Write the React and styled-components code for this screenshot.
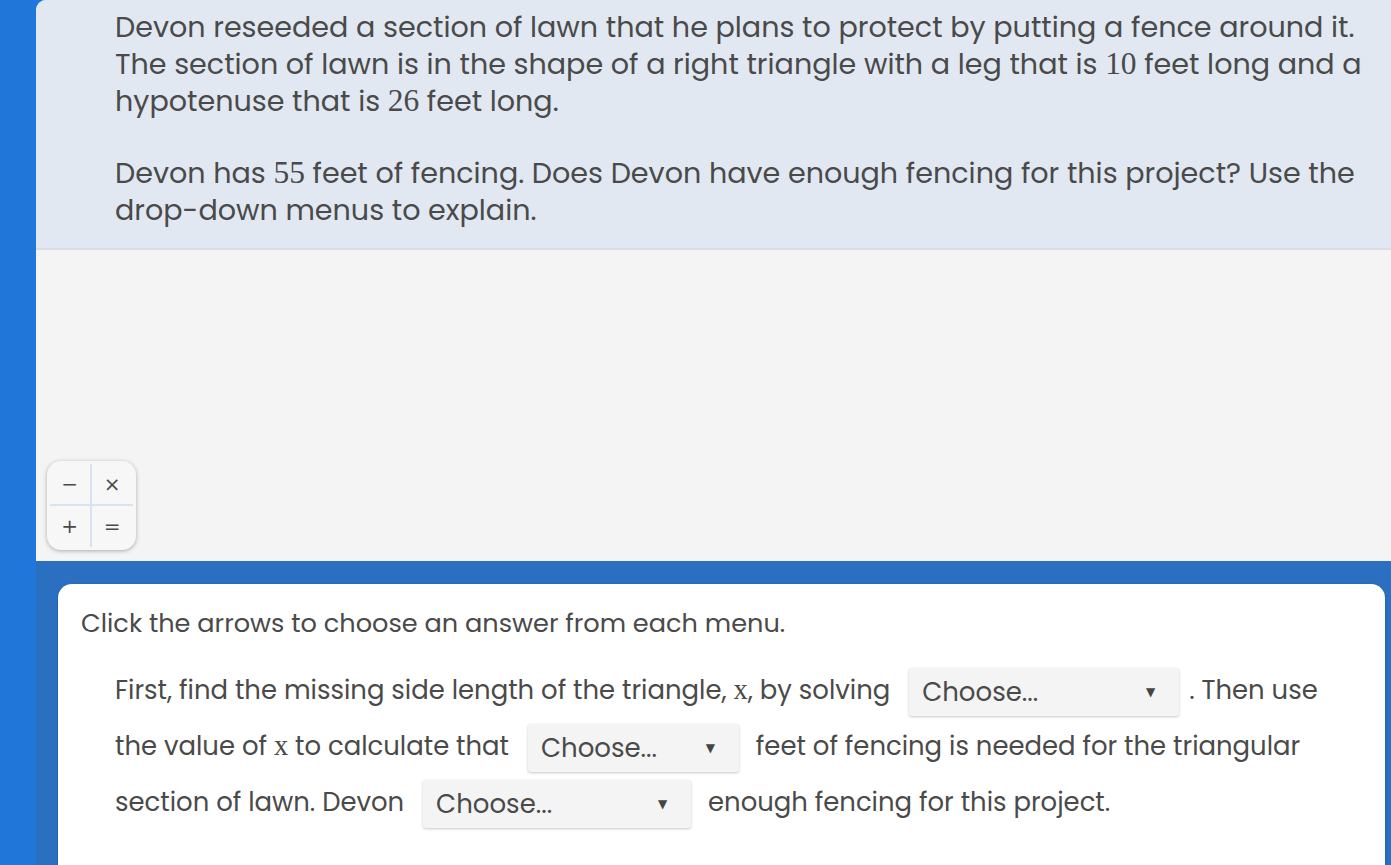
import React from 'react'
import styled, { createGlobalStyle } from 'styled-components'

const GlobalStyle = createGlobalStyle`
  html, body {
    margin: 0;
    padding: 0;
    background: #2176d9;
    overflow: hidden;
  }
  body {
    font-family: "Poppins", "Noto Sans", sans-serif;
    color: #4a4a4a;
  }
`

function Dropdown({ width }) {
  return (
    <Select $width={width}>
      <SelectText>Choose...</SelectText>
      <Caret>▼</Caret>
    </Select>
  )
}

function App() {
  return (
    <>
      <GlobalStyle />
      <Page>
        <Main>
          <Question>
            <Para>
              Devon reseeded a section of lawn that he plans to protect by putting a fence around it.
              The section of lawn is in the shape of a right triangle with a leg that is <Num>10</Num> feet long and a
              hypotenuse that is <Num>26</Num> feet long.
            </Para>
            <Para>
              Devon has <Num>55</Num> feet of fencing. Does Devon have enough fencing for this project? Use the
              drop-down menus to explain.
            </Para>
          </Question>
          <Workspace>
            <Calc>
              <CalcKey>−</CalcKey>
              <CalcKey>×</CalcKey>
              <CalcKey>+</CalcKey>
              <CalcKey>=</CalcKey>
            </Calc>
          </Workspace>
          <AnswerBand>
            <AnswerCard>
              <Prompt>Click the arrows to choose an answer from each menu.</Prompt>
              <Sentence>
                First, find the missing side length of the triangle, <Num>x</Num>, by solving{' '}
                <Dropdown width={270} />. Then use the value of <Num>x</Num> to calculate that{' '}
                <Dropdown width={211} /> feet of fencing is needed for the triangular section of lawn. Devon{' '}
                <Dropdown width={268} /> enough fencing for this project.
              </Sentence>
            </AnswerCard>
          </AnswerBand>
        </Main>
      </Page>
    </>
  )
}

const Page = styled.div`
  width: 1391px;
  height: 865px;
  display: flex;
  padding-left: 36px;
  box-sizing: border-box;
  background: #2176d9;
`
const Main = styled.div`
  flex: 1;
  display: flex;
  flex-direction: column;
  background: #f4f4f4;
  border-top-left-radius: 10px;
  overflow: hidden;
`
const Question = styled.section`
  background: #e1e8f1;
  border-bottom: 2px solid #d9dee4;
  padding: 9px 12px 18px 79px;
  height: 250px;
  box-sizing: border-box;
`
const Para = styled.p`
  margin: 0 0 35px;
  font-size: 28.6px;
  line-height: 37px;
  &:last-child { margin-bottom: 0; }
`
const Num = styled.span`
  font-family: "Liberation Serif", "Times New Roman", serif;
  font-size: 1.1em;
  line-height: 1;
`
const Workspace = styled.div`
  height: 311px;
  display: flex;
  align-items: flex-end;
  padding: 0 0 11px 11px;
  box-sizing: border-box;
`
const Calc = styled.div`
  width: 89px;
  height: 89px;
  box-sizing: border-box;
  padding: 3px;
  background: #f7f7f8;
  border-radius: 14px;
  box-shadow: 0 1px 4px rgba(0, 0, 0, 0.3);
  display: grid;
  grid-template-columns: 1fr 1fr;
  grid-template-rows: 1fr 1fr;
`
const CalcKey = styled.div`
  display: flex;
  align-items: center;
  justify-content: center;
  font-size: 20px;
  color: #4a4a4a;
  font-family: "DejaVu Sans", sans-serif;
  &:nth-child(odd) { border-right: 2px solid #d7e3f0; }
  &:nth-child(-n+2) { border-bottom: 2px solid #d7e3f0; }
`
const AnswerBand = styled.div`
  flex: 1;
  background: #2b70c0;
  padding: 23px 6px 0 22px;
`
const AnswerCard = styled.div`
  background: #fff;
  height: 100%;
  border-radius: 14px 14px 0 0;
  box-shadow: 0 1px 3px rgba(0, 0, 0, 0.25);
  padding: 22px 40px 0 23px;
  box-sizing: border-box;
`
const Prompt = styled.p`
  margin: 0;
  font-size: 25.6px;
  line-height: 34px;
`
const Sentence = styled.p`
  margin: 22px 0 0 34px;
  font-size: 25.9px;
  line-height: 56px;
`
const Select = styled.span`
  display: inline-flex;
  align-items: center;
  justify-content: space-between;
  vertical-align: middle;
  width: ${p => p.$width}px;
  height: 48px;
  box-sizing: border-box;
  padding: 0 24px 0 13px;
  margin: 0 10px 0 12px;
  background: #f4f4f4;
  border-radius: 3px;
  box-shadow: 0 1px 3px rgba(0, 0, 0, 0.22);
  line-height: 48px;
`
const SelectText = styled.span`
  font-size: 26px;
`
const Caret = styled.span`
  font-size: 12px;
  color: #444;
  font-family: "DejaVu Sans", sans-serif;
`

export default App
